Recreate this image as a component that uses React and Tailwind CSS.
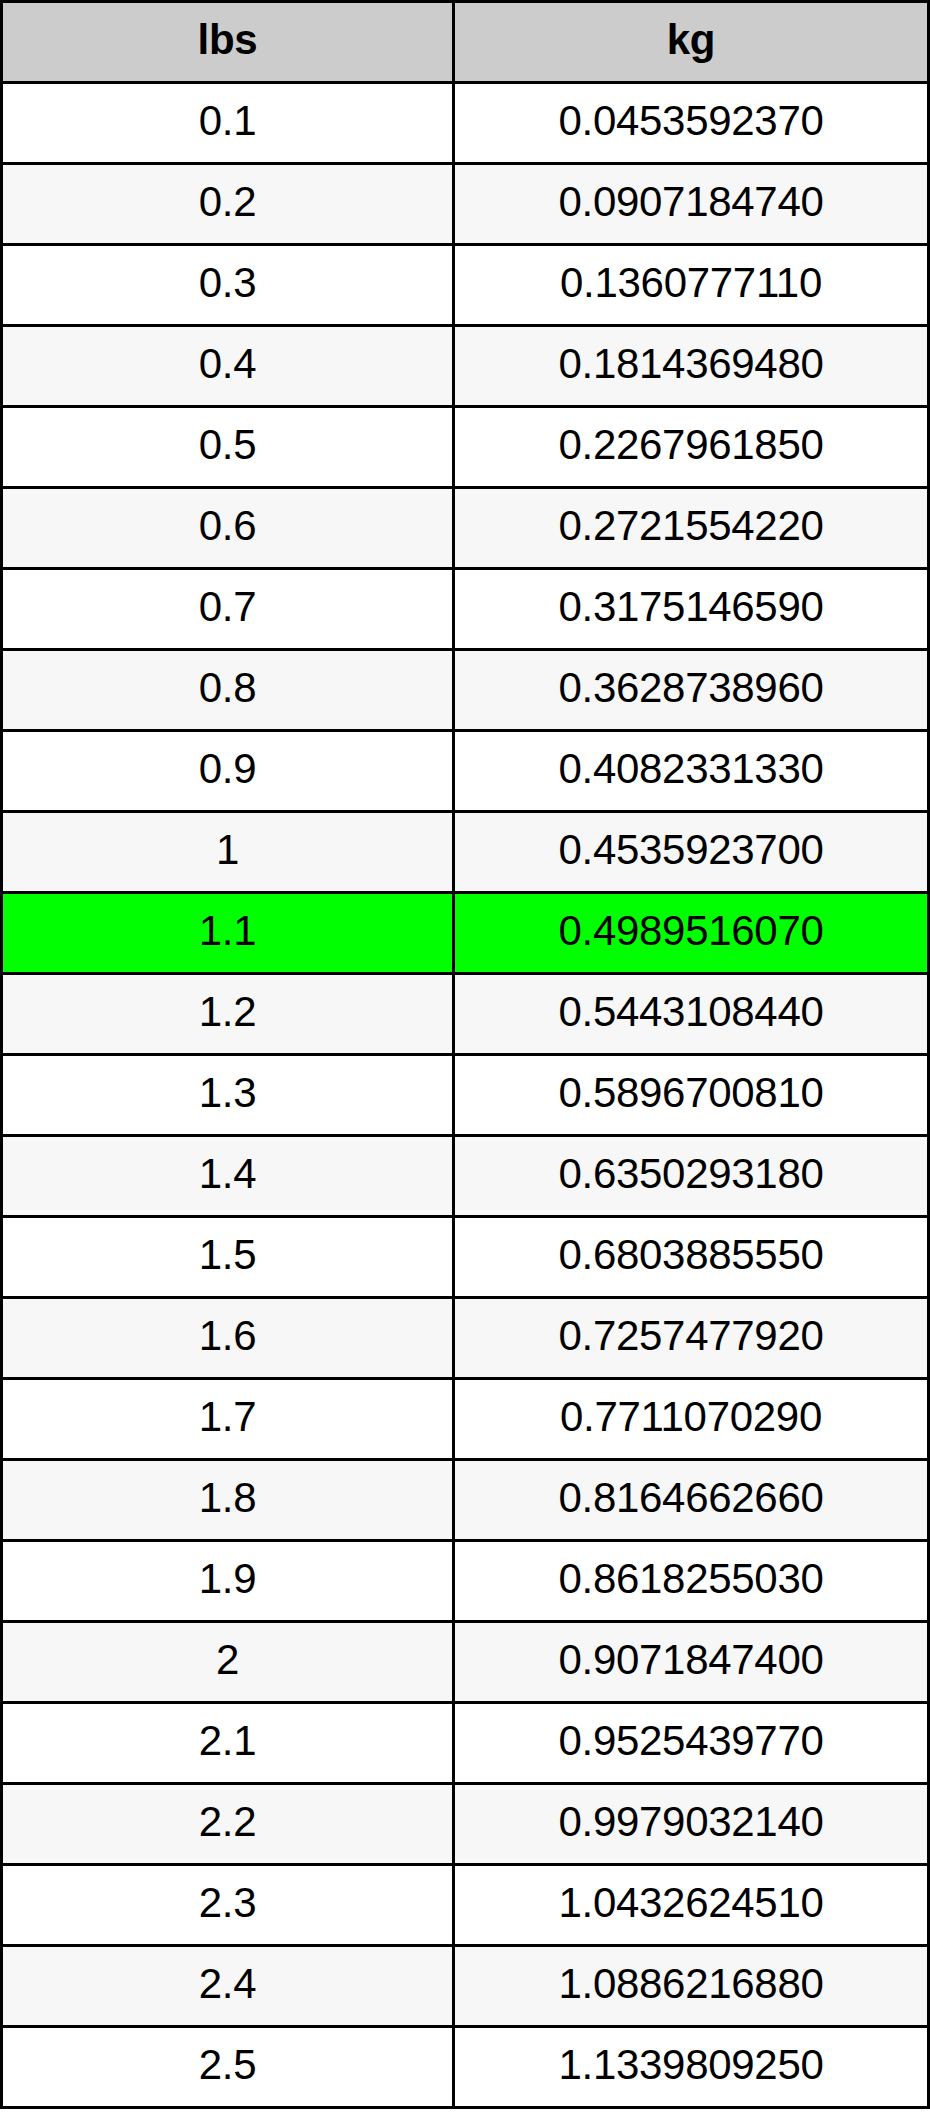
// Pounds to kilograms conversion table
const rows = [
  ['0.1', '0.0453592370'],
  ['0.2', '0.0907184740'],
  ['0.3', '0.1360777110'],
  ['0.4', '0.1814369480'],
  ['0.5', '0.2267961850'],
  ['0.6', '0.2721554220'],
  ['0.7', '0.3175146590'],
  ['0.8', '0.3628738960'],
  ['0.9', '0.4082331330'],
  ['1', '0.4535923700'],
  ['1.1', '0.4989516070'],
  ['1.2', '0.5443108440'],
  ['1.3', '0.5896700810'],
  ['1.4', '0.6350293180'],
  ['1.5', '0.6803885550'],
  ['1.6', '0.7257477920'],
  ['1.7', '0.7711070290'],
  ['1.8', '0.8164662660'],
  ['1.9', '0.8618255030'],
  ['2', '0.9071847400'],
  ['2.1', '0.9525439770'],
  ['2.2', '0.9979032140'],
  ['2.3', '1.0432624510'],
  ['2.4', '1.0886216880'],
  ['2.5', '1.1339809250'],
];

const highlighted = '1.1';

function Cell({ children, bg, bold }) {
  return (
    <div
      className={`${bg} h-[78px] flex items-center justify-center text-[42px] tracking-[-0.3px] leading-none text-black pb-[4px] ${
        bold ? 'font-bold' : 'font-normal'
      }`}
    >
      {children}
    </div>
  );
}

export default function App() {
  return (
    <div className="min-h-screen bg-white font-['Liberation_Sans',Arial,sans-serif]">
      <div className="w-[930px] bg-black p-[3px] grid grid-cols-[449px_472px] gap-[3px]">
        {/* Header */}
        <Cell bg="bg-[#cccccc]" bold>lbs</Cell>
        <Cell bg="bg-[#cccccc]" bold>kg</Cell>

        {/* Body rows */}
        {rows.map(([lbs, kg], i) => {
          let bg = i % 2 === 0 ? 'bg-white' : 'bg-[#f7f7f7]';
          if (lbs === highlighted) bg = 'bg-[#00ff00]';
          return [
            <Cell key={lbs + '-l'} bg={bg}>{lbs}</Cell>,
            <Cell key={lbs + '-k'} bg={bg}>{kg}</Cell>,
          ];
        })}
      </div>
    </div>
  );
}
